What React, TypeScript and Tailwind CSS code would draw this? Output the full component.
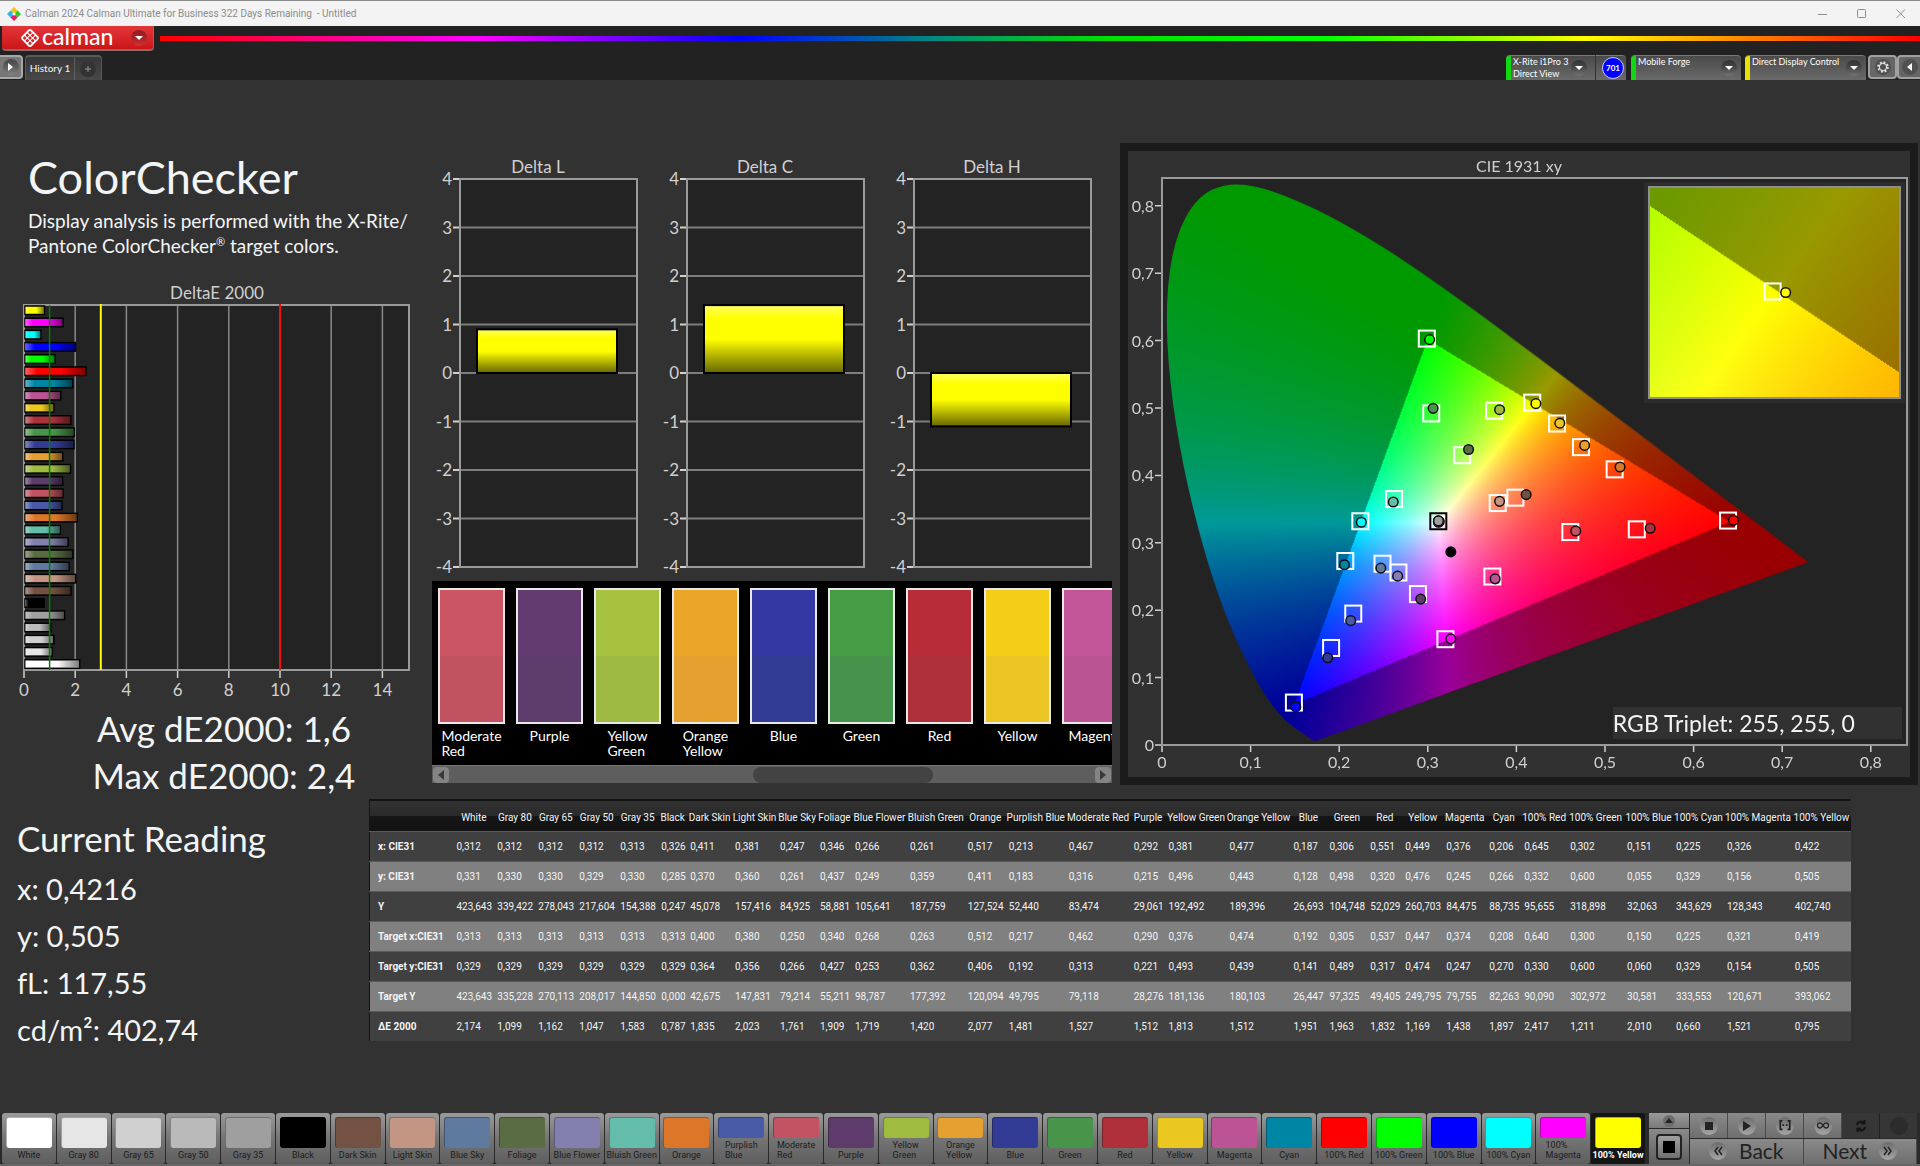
import React, { useEffect, useRef } from "react";

type Patch = {
  name: string;
  color: string;
  two?: boolean;
  col: number;
  x: string;
  y: string;
  Y: string;
  tx: string;
  ty: string;
  tY: string;
  dE: string;
};

const p = (name: string, color: string, col: number, row: string, two = false): Patch => {
  const [x, y, Y, tx, ty, tY, dE] = row.split(" ");
  return { name, color, col, two, x, y, Y, tx, ty, tY, dE };
};

const patches: Patch[] = [
  p("White", "#ffffff", 41, "0,312 0,331 423,643 0,313 0,329 423,643 2,174"),
  p("Gray 80", "#e6e6e6", 41, "0,312 0,330 339,422 0,313 0,329 335,228 1,099"),
  p("Gray 65", "#d0d0d0", 41, "0,312 0,330 278,043 0,313 0,329 270,113 1,162"),
  p("Gray 50", "#bababa", 41, "0,312 0,329 217,604 0,313 0,329 208,017 1,047"),
  p("Gray 35", "#9f9f9f", 41, "0,313 0,330 154,388 0,313 0,329 144,850 1,583"),
  p("Black", "#000000", 29, "0,326 0,285 0,247 0,313 0,329 0,000 0,787"),
  p("Dark Skin", "#735244", 45, "0,411 0,370 45,078 0,400 0,364 42,675 1,835"),
  p("Light Skin", "#c29682", 45, "0,381 0,360 157,416 0,380 0,356 147,831 2,023"),
  p("Blue Sky", "#5e7a9f", 40, "0,247 0,261 84,925 0,250 0,266 79,214 1,761"),
  p("Foliage", "#596c42", 35, "0,346 0,437 58,881 0,340 0,427 55,211 1,909"),
  p("Blue Flower", "#8380b0", 55, "0,266 0,249 105,641 0,268 0,253 98,787 1,719"),
  p("Bluish Green", "#64bdaa", 58, "0,261 0,359 187,759 0,263 0,362 177,392 1,420"),
  p("Orange", "#dc7729", 41, "0,517 0,411 127,524 0,512 0,406 120,094 2,077"),
  p("Purplish Blue", "#495ba6", 60, "0,213 0,183 52,440 0,217 0,192 49,795 1,481", true),
  p("Moderate Red", "#c35362", 65, "0,467 0,316 83,474 0,462 0,313 79,118 1,527", true),
  p("Purple", "#5d3c6c", 35, "0,292 0,215 29,061 0,290 0,221 28,276 1,512"),
  p("Yellow Green", "#9fbc41", 61, "0,381 0,496 192,492 0,376 0,493 181,136 1,813", true),
  p("Orange Yellow", "#e5a02f", 64, "0,477 0,443 189,396 0,474 0,439 180,103 1,512", true),
  p("Blue", "#323c95", 36, "0,187 0,128 26,693 0,192 0,141 26,447 1,951"),
  p("Green", "#47944a", 41, "0,306 0,498 104,748 0,305 0,489 97,325 1,963"),
  p("Red", "#af303b", 35, "0,551 0,320 52,029 0,537 0,317 49,405 1,832"),
  p("Yellow", "#ebc722", 41, "0,449 0,476 260,703 0,447 0,474 249,795 1,169"),
  p("Magenta", "#bb5395", 43, "0,376 0,245 84,475 0,374 0,247 79,755 1,438"),
  p("Cyan", "#0086a5", 35, "0,206 0,266 88,735 0,208 0,270 82,263 1,897"),
  p("100% Red", "#ff0000", 46, "0,645 0,332 95,655 0,640 0,330 90,090 2,417"),
  p("100% Green", "#00ff00", 57, "0,302 0,600 318,898 0,300 0,600 302,972 1,211"),
  p("100% Blue", "#0000ff", 49, "0,151 0,055 32,063 0,150 0,060 30,581 2,010"),
  p("100% Cyan", "#00ffff", 51, "0,225 0,329 343,629 0,225 0,329 333,553 0,660"),
  p("100% Magenta", "#ff00ff", 68, "0,326 0,156 128,343 0,321 0,154 120,671 1,521", true),
  p("100% Yellow", "#ffff00", 59, "0,422 0,505 402,740 0,419 0,505 393,062 0,795"),
];

const num = (s: string) => parseFloat(s.replace(",", "."));

/* ---------- chromaticity ---------- */

const locus: [number, number][] = [
  [0.1741, 0.005], [0.1726, 0.0048], [0.1714, 0.0051], [0.1689, 0.0069], [0.1644, 0.0109],
  [0.1566, 0.0177], [0.144, 0.0297], [0.1355, 0.0399], [0.1241, 0.0578], [0.1096, 0.0868],
  [0.0913, 0.1327], [0.0687, 0.2007], [0.0454, 0.295], [0.0235, 0.4127], [0.0082, 0.5384],
  [0.0039, 0.6548], [0.0139, 0.7502], [0.0389, 0.812], [0.0743, 0.8338], [0.1142, 0.8262],
  [0.1547, 0.8059], [0.1929, 0.7816], [0.2296, 0.7543], [0.2658, 0.7243], [0.3016, 0.6923],
  [0.3373, 0.6589], [0.3731, 0.6245], [0.4087, 0.5896], [0.4441, 0.5547], [0.4788, 0.5202],
  [0.5125, 0.4866], [0.5448, 0.4544], [0.5752, 0.4242], [0.6029, 0.3965], [0.627, 0.3725],
  [0.6482, 0.3514], [0.6658, 0.334], [0.6915, 0.3083], [0.7079, 0.292], [0.73, 0.27],
];

type View = { x0: number; x1: number; y0: number; y1: number };

function paint(canvas: HTMLCanvasElement, v: View, clip: boolean) {
  const ctx = canvas.getContext("2d");
  if (!ctx) return;
  const { width: w, height: h } = canvas;
  const layer = document.createElement("canvas");
  layer.width = w;
  layer.height = h;
  const lctx = layer.getContext("2d")!;
  const img = lctx.createImageData(w, h);
  for (let j = 0; j < h; j++) {
    for (let i = 0; i < w; i++) {
      const x = v.x0 + ((i + 0.5) / w) * (v.x1 - v.x0);
      const y = v.y1 - ((j + 0.5) / h) * (v.y1 - v.y0);
      const z = 1 - x - y;
      const rgb = [
        3.2406 * x - 1.5372 * y - 0.4986 * z,
        -0.9689 * x + 1.8758 * y + 0.0415 * z,
        0.0557 * x - 0.204 * y + 1.057 * z,
      ];
      const k = Math.min(...rgb) >= -0.001 ? 255 : 153;
      const m = Math.max(...rgb);
      const o = (j * w + i) * 4;
      for (let c = 0; c < 3; c++) img.data[o + c] = (k * Math.max(0, rgb[c])) / m;
      img.data[o + 3] = 255;
    }
  }
  lctx.putImageData(img, 0, 0);
  ctx.clearRect(0, 0, w, h);
  ctx.save();
  if (clip) {
    const P = locus.map(([x, y]) => [((x - v.x0) / (v.x1 - v.x0)) * w, ((v.y1 - y) / (v.y1 - v.y0)) * h]);
    ctx.beginPath();
    ctx.moveTo(P[0][0], P[0][1]);
    for (let i = 1; i < P.length - 1; i++) {
      ctx.quadraticCurveTo(P[i][0], P[i][1], (P[i][0] + P[i + 1][0]) / 2, (P[i][1] + P[i + 1][1]) / 2);
    }
    ctx.lineTo(P[P.length - 1][0], P[P.length - 1][1]);
    ctx.closePath();
    ctx.clip();
  }
  ctx.drawImage(layer, 0, 0);
  ctx.restore();
}

function Chroma({ view, w, h, clip, className }: { view: View; w: number; h: number; clip: boolean; className: string }) {
  const ref = useRef<HTMLCanvasElement>(null);
  useEffect(() => {
    if (ref.current) paint(ref.current, view, clip);
  }, [view, clip]);
  return <canvas ref={ref} width={w} height={h} className={className} />;
}

const mainView: View = { x0: 0, x1: 0.8415, y0: 0, y1: 0.8405 };
const insetView: View = { x0: 0.3944, x1: 0.4444, y0: 0.4802, y1: 0.5302 };

const CX = (x: number) => 34 + x * 886;
const CY = (y: number) => 594 - y * 674;

function CieChart() {
  const ticks = [0, 1, 2, 3, 4, 5, 6, 7, 8];
  const label = (t: number) => (t === 0 ? "0" : `0,${t}`);
  return (
    <section className="relative border-8 border-[#1b1b1b] bg-[#313131]">
      <div className="relative">
        <Chroma
          view={mainView}
          w={746}
          h={567}
          clip
          className="absolute top-[4.3%] left-[4.3%] h-[90.5%] w-[95.3%] bg-[#232323]"
        />
        <svg viewBox="0 0 782 626" className="relative block h-auto w-full font-[Lato]" role="img" aria-label="CIE 1931 xy">
          <text x="391" y="21" fontSize="16" fill="#d0d0d0" textAnchor="middle">CIE 1931 xy</text>
          <rect x="34" y="27" width="745" height="567" fill="none" stroke="#9a9a9a" strokeWidth="2" />
          {ticks.map((t) => (
            <g key={t} fill="#d0d0d0" fontSize="16">
              <path d={`M${CX(t / 10)} 595v6M33 ${CY(t / 10)}h-6`} stroke="#d0d0d0" strokeWidth="1.5" />
              <text x={CX(t / 10)} y="617" textAnchor="middle">{label(t)}</text>
              <text x="26" y={CY(t / 10) + 6} textAnchor="end">{label(t)}</text>
            </g>
          ))}
          {patches.slice(6).map((q) => (
            <rect key={q.name} x={CX(num(q.tx)) - 9} y={CY(num(q.ty)) - 10} width="16" height="16" fill="none" stroke="#fff" strokeWidth="2" />
          ))}
          <rect x={CX(0.313) - 9} y={CY(0.329) - 10} width="16" height="16" fill="none" stroke="#000" strokeWidth="2" />
          {patches.map((q) => (
            <circle key={q.name} cx={CX(num(q.x))} cy={CY(num(q.y)) - 1} r="4.8" fill={q.color} stroke="#111" strokeWidth="1.5" />
          ))}
          <circle cx={CX(0.312)} cy={CY(0.331) - 1} r="4.8" fill="#9f9f9f" stroke="#111" strokeWidth="1.5" />
        </svg>
        <div className="absolute top-[5%] right-[0.6%] w-[33.4%] border-4 border-[#2c2c2c]">
          <div className="relative border-2 border-[#8f8f8f]">
            <Chroma view={insetView} w={248} h={208} clip={false} className="block h-auto w-full" />
            <svg viewBox="0 0 248 208" className="absolute inset-0 size-full">
              <rect x="114" y="95" width="16" height="16" fill="none" stroke="#fff" strokeWidth="2" />
              <circle cx="135" cy="104" r="4.8" fill="#ff0" stroke="#111" strokeWidth="1.5" />
            </svg>
          </div>
        </div>
        <p className="absolute right-[1%] bottom-[6%] w-[37%] bg-[#313131] font-[Lato] text-[23px] leading-8 text-gray-100">
          RGB Triplet: 255, 255, 0
        </p>
      </div>
    </section>
  );
}

/* ---------- bar charts ---------- */

function DeltaChart({ title, value }: { title: string; value: number }) {
  const Y = (v: number) => 213 - v * 48.5;
  const top = value > 0 ? Y(value) : Y(0);
  const id = "shine" + title.slice(-1);
  return (
    <svg viewBox="0 0 227 421" className="block h-auto min-w-0 flex-1 font-[Lato]" role="img" aria-label={title}>
      <defs>
        <linearGradient id={id} x1="0" y1="0" x2="0" y2="1">
          <stop offset="0" stopColor="#ffff66" />
          <stop offset="0.2" stopColor="#ffff00" />
          <stop offset="0.5" stopColor="#ffff00" />
          <stop offset="1" stopColor="#666600" />
        </linearGradient>
      </defs>
      <rect x="27" y="19" width="177" height="388" fill="#232323" />
      <text x="105" y="13" fontSize="17" textAnchor="middle" fill="#d0d0d0">{title}</text>
      {[4, 3, 2, 1, 0, -1, -2, -3, -4].map((v) => (
        <g key={v}>
          <path d={`M27 ${Y(v)}h177`} stroke="#7d7d7d" strokeWidth="2" />
          <path d={`M20 ${Y(v)}h7`} stroke="#d0d0d0" strokeWidth="2" />
          <text x="19" y={Y(v) + 6} fontSize="17" textAnchor="end" fill="#d0d0d0">{v}</text>
        </g>
      ))}
      <rect x="27" y="19" width="177" height="388" fill="none" stroke="#9a9a9a" strokeWidth="2" />
      <rect x="44" y={top} width="140" height={Math.abs(value) * 48.5} fill={`url(#${id})`} stroke="#000" strokeWidth="2" />
    </svg>
  );
}

function DeltaEChart() {
  const X = (v: number) => 24 + v * 25.6;
  const rows = [...patches].reverse();
  return (
    <svg viewBox="0 0 432 425" className="block h-auto w-full font-[Lato]" role="img" aria-label="DeltaE 2000">
      <defs>
        <linearGradient id="barShade">
          <stop offset="0" stopColor="#fff" stopOpacity="0.4" />
          <stop offset="0.2" stopColor="#fff" stopOpacity="0" />
          <stop offset="0.6" stopColor="#000" stopOpacity="0" />
          <stop offset="1" stopColor="#000" stopOpacity="0.5" />
        </linearGradient>
      </defs>
      <text x="217" y="19" fontSize="17" textAnchor="middle" fill="#d0d0d0">DeltaE 2000</text>
      <rect x="24" y="25" width="385" height="365" fill="#232323" />
      {[0, 2, 4, 6, 8, 10, 12, 14].map((v) => (
        <g key={v}>
          <path d={`M${X(v)} 25v365`} stroke="#8a8a8a" strokeWidth="1.5" />
          <path d={`M${X(v)} 391v7`} stroke="#d0d0d0" strokeWidth="1.5" />
          <text x={X(v)} y="416" fontSize="17" textAnchor="middle" fill="#d0d0d0">{v}</text>
        </g>
      ))}
      <rect x="24" y="25" width="385" height="365" fill="none" stroke="#9a9a9a" strokeWidth="2" />
      {rows.map((q, i) => {
        const y = 26 + i * 12.2;
        const w = num(q.dE) * 25.6 - 1;
        return (
          <g key={q.name}>
            <rect x="25" y={y} width={w} height="8.5" fill={q.color} stroke="#000" strokeWidth="1.5" />
            <rect x="25" y={y + 0.75} width={w - 0.75} height="7" fill="url(#barShade)" />
          </g>
        );
      })}
      <path d={`M${X(1)} 25v365`} stroke="#008000" strokeWidth="1.5" />
      <path d={`M${X(3)} 24v366`} stroke="#ffff00" strokeWidth="2" />
      <path d={`M${X(10)} 24v366`} stroke="#f01010" strokeWidth="2" />
    </svg>
  );
}

/* ---------- header ---------- */

const Down = () => (
  <span className="flex size-4 shrink-0 items-center justify-center rounded-full bg-gradient-to-b from-black/35 to-white/10">
    <svg viewBox="0 0 8 4" className="w-2 fill-white"><path d="M0 0h8L4 4z" /></svg>
  </span>
);

function TitleBar() {
  return (
    <div className="flex h-[26px] items-center border-t border-[#8a8a8a] bg-[#f3f3f3] pr-3.5 pl-[7px] text-[#8c8c8c]">
      <svg viewBox="0 0 14 14" className="size-3.5">
        <path d="M7 0l3.500 3.500L7 7 3.500 3.500z" fill="#fdc10a" />
        <path d="M3.500 3.500L7 7l-3.500 3.500L0 7z" fill="#2bb5f0" />
        <path d="M10.500 3.500L14 7l-3.500 3.500L7 7z" fill="#25d025" />
        <path d="M7 7l3.500 3.500L7 14l-3.500-3.500z" fill="#ee1a6b" />
        <path d="M7 5.200L8.800 7 7 8.800 5.200 7z" fill="#fff" />
      </svg>
      <p className="ml-1 flex-1 font-[Roboto] text-[10px] whitespace-pre">
        Calman 2024 Calman Ultimate for Business 322 Days Remaining  - Untitled
      </p>
      <div className="flex items-center gap-[29px]">
        <button aria-label="Minimize"><svg viewBox="0 0 10 10" className="block size-2.5 stroke-current"><path d="M0 5.500h9" /></svg></button>
        <button aria-label="Maximize"><svg viewBox="0 0 10 10" className="block size-2.5 fill-none stroke-current"><rect x=".5" y=".5" width="8" height="8" rx="1" /></svg></button>
        <button aria-label="Close"><svg viewBox="0 0 10 10" className="block size-2.5 stroke-current"><path d="M.5.500l8.500 8.500M9 .5L.5 9" /></svg></button>
      </div>
    </div>
  );
}

function CalmanMark() {
  return (
    <svg viewBox="0 0 20 20" className="size-5">
      <g transform="rotate(45 10 10)" fill="#fff">
        <rect x="3" y="3" width="14" height="14" rx="2.500" />
        <g fill="#d92025">
          <rect x="4.800" y="4.800" width="2.800" height="2.800" rx=".8" />
          <rect x="8.600" y="4.800" width="2.800" height="2.800" rx=".8" />
          <rect x="12.400" y="4.800" width="2.800" height="2.800" rx=".8" />
          <rect x="4.800" y="8.600" width="2.800" height="2.800" rx=".8" />
          <rect x="8.600" y="8.600" width="2.800" height="2.800" rx=".8" />
          <rect x="12.400" y="8.600" width="2.800" height="2.800" rx=".8" />
          <rect x="4.800" y="12.400" width="2.800" height="2.800" rx=".8" />
          <rect x="8.600" y="12.400" width="2.800" height="2.800" rx=".8" />
          <rect x="12.400" y="12.400" width="2.800" height="2.800" rx=".8" />
        </g>
      </g>
    </svg>
  );
}

const deviceBtn =
  "flex h-[25px] justify-between overflow-hidden rounded-t-[4px] border-t border-[#7a7a7a] bg-gradient-to-b from-[#4a4a4a] to-[#6a6a6a] text-left font-[Lato] text-[9px] leading-3 text-white";

function Header() {
  return (
    <header className="bg-[#222222]">
      <div className="flex h-[25px] items-center pl-0.5">
        <button className="flex h-[25px] w-[152px] items-center rounded-b-[4px] border-r border-b-2 border-[#8f6a6a] bg-gradient-to-b from-[#e23539] to-[#cc1417] pr-1.5 pl-[18px]">
          <CalmanMark />
          <span className="ml-0.5 flex-1 pb-1 text-left font-[Lato] text-[23px] leading-5 font-medium text-white">calman</span>
          <Down />
        </button>
        <div className="ml-1.5 h-[5px] flex-1 bg-[linear-gradient(90deg,#ff0000_0%,#ff00ff_18%,#0000ff_33%,#008a80_44%,#00e000_54%,#00ff00_66%,#ffff00_81%,#ff0000_100%)]" />
      </div>
      <div className="mt-1 flex items-start justify-between">
        <div className="flex">
          <button aria-label="Expand" className="flex h-6 w-[23px] items-center justify-center rounded-r-[4px] border-2 border-l-0 border-[#a8a8a8] bg-[#777]">
            <span className="flex size-4 items-center justify-center rounded-full bg-gradient-to-b from-black/40 to-white/10">
              <svg viewBox="0 0 5 8" className="h-2 fill-white"><path d="M0 0l5 4-5 4z" /></svg>
            </span>
          </button>
          <div className="ml-0.5 flex h-[25px] rounded-t-[4px] border-x border-t-2 border-[#5a5a5a] bg-gradient-to-b from-[#383838] to-[#484848]">
            <button className="w-[49px] border-r border-[#5f5f5f] font-[Lato] text-[10px] text-gray-100">History 1</button>
            <button aria-label="Add tab" className="flex w-[26px] items-center justify-center">
              <span className="flex size-4 items-center justify-center rounded-full bg-[#333]">
                <svg viewBox="0 0 6 6" className="size-1.5 stroke-[#999]"><path d="M3 0v6M0 3h6" /></svg>
              </span>
            </button>
          </div>
        </div>
        <div className="flex items-start">
          <button className={deviceBtn + " w-[90px] rounded-tr-none border-r border-r-[#333]"}>
            <span className="h-full w-[5px] shrink-0 bg-[#12d812]" />
            <span className="ml-0.5 flex-1 whitespace-nowrap">X-Rite i1Pro 3<br />Direct View</span>
            <span className="mt-1 mr-2"><Down /></span>
          </button>
          <button className={deviceBtn + " w-[30px] rounded-tl-none pl-1"}>
            <span className="m-auto flex size-[22px] items-center justify-center rounded-full border border-[#c8c8ff] bg-[#0000ff] text-[8px] font-bold">701</span>
          </button>
          <button className={deviceBtn + " ml-[5px] w-[110px]"}>
            <span className="h-full w-[5px] shrink-0 bg-[#12d812]" />
            <span className="ml-0.5 flex-1">Mobile Forge</span>
            <span className="mt-1 mr-1"><Down /></span>
          </button>
          <button className={deviceBtn + " ml-1 w-[121px]"}>
            <span className="h-full w-[5px] shrink-0 bg-[#e8e000]" />
            <span className="ml-0.5 flex-1 whitespace-nowrap">Direct Display Control</span>
            <span className="mt-1 mr-1"><Down /></span>
          </button>
          <button aria-label="Settings" className="ml-0.5 flex h-6 w-[29px] items-center justify-center rounded-[4px] border-2 border-[#a0a0a0] bg-[#666]">
            <svg viewBox="0 0 16 16" className="size-4">
              <circle cx="8" cy="8" r="8" fill="#505050" />
              <circle cx="8" cy="8" r="4.800" fill="none" stroke="#ddd" strokeWidth="2" strokeDasharray="1.900 1.870" />
              <circle cx="8" cy="8" r="3.600" fill="#505050" stroke="#ddd" strokeWidth="1.200" />
            </svg>
          </button>
          <button aria-label="Collapse" className="flex h-6 w-[23px] items-center justify-center rounded-l-[4px] border-2 border-r-0 border-[#a0a0a0] bg-[#666]">
            <span className="flex size-4 items-center justify-center rounded-full bg-[#505050]">
              <svg viewBox="0 0 5 8" className="h-2 fill-white"><path d="M5 0L0 4l5 4z" /></svg>
            </span>
          </button>
        </div>
      </div>
    </header>
  );
}

/* ---------- swatch strip ---------- */

const strip: [string, string, string, string][] = [
  ["Moderate", "Red", "#c95662", "#c15361"],
  ["Purple", "", "#633b70", "#5c3d6b"],
  ["Yellow", "Green", "#a7c23f", "#9fba42"],
  ["Orange", "Yellow", "#eba529", "#e5a030"],
  ["Blue", "", "#3438a2", "#323c95"],
  ["Green", "", "#459c45", "#47924a"],
  ["Red", "", "#b72c36", "#ad303b"],
  ["Yellow", "", "#f4cd17", "#ebc524"],
  ["Magenta", "", "#c15597", "#ba5493"],
];

function SwatchStrip() {
  return (
    <section className="mr-0.5 overflow-hidden bg-black">
      <div className="flex h-[184px] gap-[11px] overflow-hidden pt-[7px] pl-1.5">
        {strip.map(([a, b, top, bottom], i) => (
          <div key={i} className="flex w-[67px] shrink-0 flex-col items-center">
            <div className="flex h-[136px] w-full flex-col border-2 border-[#e8e8e8]">
              <div className="flex-1" style={{ background: top }} />
              <div className="flex-1" style={{ background: bottom }} />
            </div>
            <p className="mt-1 font-[Lato] text-[14px] leading-[15px] text-white">
              {a}
              {b && <><br />{b}</>}
            </p>
          </div>
        ))}
      </div>
      <div className="flex h-[18px] items-center border-t border-[#777] bg-[#5e5e5e] px-px">
        <button aria-label="Scroll left" className="flex h-4 w-4 items-center justify-center rounded bg-[#858585]">
          <svg viewBox="0 0 6 10" className="h-2.5 fill-[#3a3a3a]"><path d="M6 0L0 5l6 5z" /></svg>
        </button>
        <div className="flex-1">
          <div className="ml-[47%] h-4 w-[28%] rounded-lg bg-[#434343]" />
        </div>
        <button aria-label="Scroll right" className="flex h-4 w-4 items-center justify-center rounded bg-[#858585]">
          <svg viewBox="0 0 6 10" className="h-2.5 fill-[#3a3a3a]"><path d="M0 0l6 5-6 5z" /></svg>
        </button>
      </div>
    </section>
  );
}

/* ---------- table ---------- */

const rowDefs: [string, keyof Patch][] = [
  ["x: CIE31", "x"],
  ["y: CIE31", "y"],
  ["Y", "Y"],
  ["Target x:CIE31", "tx"],
  ["Target y:CIE31", "ty"],
  ["Target Y", "tY"],
  ["ΔE 2000", "dE"],
];

function ReadingsTable() {
  const total = 84 + patches.reduce((s, q) => s + q.col, 0);
  return (
    <table className="w-full table-fixed border-t-2 border-l border-[#141414] font-[Roboto] text-[10px] whitespace-nowrap text-gray-100">
      <colgroup>
        <col style={{ width: `${(84 / total) * 100}%` }} />
        {patches.map((q) => (
          <col key={q.name} style={{ width: `${(q.col / total) * 100}%` }} />
        ))}
      </colgroup>
      <thead>
        <tr className="h-[31px] bg-[linear-gradient(#333333_0%,#2a2a2a_50%,#161616_52%,#121212_100%)]">
          <td />
          {patches.map((q) => (
            <th key={q.name} scope="col" className="p-0 pt-1 text-center font-normal">{q.name}</th>
          ))}
        </tr>
      </thead>
      <tbody>
        {rowDefs.map(([label, key]) => (
          <tr key={label} className="h-[30px] border-t border-[#5a5a5a] bg-[#404040] even:bg-[#808080]">
            <th scope="row" className="p-0 pl-2 text-left font-bold">{label}</th>
            {patches.map((q) => (
              <td key={q.name} className="p-0 pl-[3px]">{q[key]}</td>
            ))}
          </tr>
        ))}
      </tbody>
    </table>
  );
}

/* ---------- footer ---------- */

const toolBtn = "flex flex-1 items-center justify-center border-r border-[#4a4a4a] bg-gradient-to-b from-[#8a8a8a] to-[#6e6e6e]";
const disc = "flex size-[18px] items-center justify-center rounded-full bg-gradient-to-b from-[#6c6c6c] to-[#a6a6a6]";

function Footer() {
  return (
    <footer className="flex h-[53px] border-b-2 border-[#666] bg-[#2a2a2a] pl-0.5">
      <div className="flex flex-1 gap-px">
        {patches.map((q, i) => {
          const on = i === patches.length - 1;
          return (
            <button
              key={q.name}
              className={
                "flex min-w-0 flex-1 flex-col items-center overflow-hidden rounded-[3px] pt-1 font-[Roboto] text-[9px] " +
                (on ? "bg-[#151515] font-bold text-white" : "bg-gradient-to-b from-[#9a9a9a] via-[#757575] to-[#5e5e5e] text-[#1c1c1c]")
              }
            >
              <span
                className={"w-[46px] shrink-0 rounded-[3px] border-t border-l border-black/30 " + (q.two ? "h-[21px]" : "h-[31px]")}
                style={{ background: q.color }}
              />
              {q.two ? (
                <span className="mt-0.5 text-left leading-[10px]">{q.name.split(" ")[0]}<br />{q.name.split(" ")[1]}</span>
              ) : (
                <span className="mt-0.5 leading-[10px] whitespace-nowrap">{q.name}</span>
              )}
            </button>
          );
        })}
      </div>
      <div className="ml-1 flex w-[40px] flex-col">
        <button aria-label="Show list" className="flex h-[15px] items-center justify-center bg-gradient-to-b from-[#9a9a9a] to-[#7a7a7a]">
          <span className="flex size-3 items-center justify-center rounded-full bg-[#6c6c6c]">
            <svg viewBox="0 0 8 5" className="w-2 fill-[#222]"><path d="M0 5h8L4 0z" /></svg>
          </span>
        </button>
        <button aria-label="Pattern window" className="mt-px flex flex-1 items-center justify-center bg-gradient-to-b from-[#8a8a8a] to-[#606060]">
          <span className="flex size-[26px] items-center justify-center rounded-[4px] border-2 border-[#222] bg-gradient-to-b from-[#a0a0a0] to-[#707070]">
            <span className="size-3 bg-black" />
          </span>
        </button>
      </div>
      <div className="mr-[3px] ml-px flex w-[227px] flex-col gap-px">
        <div className="flex h-[25px]">
          <button aria-label="Stop" className={toolBtn}><span className={disc}><svg viewBox="0 0 8 8" className="size-2"><path d="M0 0h8v8H0z" fill="#222" /></svg></span></button>
          <button aria-label="Play" className={toolBtn}><span className={disc}><svg viewBox="0 0 8 10" className="h-2.5"><path d="M0 0l8 5-8 5z" fill="#222" /></svg></span></button>
          <button aria-label="Read series" className={toolBtn}><span className={disc}><svg viewBox="0 0 14 12" className="w-3 fill-none stroke-[#222] stroke-2"><path d="M4 1H1.500v10H4M10 1h2.500v10H10M4 6h2M8 6h2" /></svg></span></button>
          <button aria-label="Read continuously" className={toolBtn}><span className={disc}><svg viewBox="0 0 14 8" className="w-3 fill-none stroke-[#222] stroke-[1.500]"><path d="M7 4C5.500 1.500 4.500 1 3.500 1a3 3 0 000 6C4.500 7 5.500 6.500 7 4s2.500-3 3.500-3a3 3 0 010 6C9.500 7 8.500 6.500 7 4z" /></svg></span></button>
          <button aria-label="Refresh" className="flex flex-1 items-center justify-center border-r border-[#222] bg-[#363636]"><svg viewBox="0 0 12 12" className="size-3 fill-none stroke-[#151515] stroke-2"><path d="M2 5a4 4 0 017-2M10 7a4 4 0 01-7 2M9.500 0v3.500H6M2.500 12V8.500H6" /></svg></button>
          <button aria-label="Disabled" className="flex flex-1 items-center justify-center bg-[#363636]"><span className="size-[18px] rounded-full bg-[#2c2c2c]" /></button>
        </div>
        <div className="flex h-[25px] font-[Lato] text-[21px] leading-5 text-[#222]">
          <button className={toolBtn + " gap-3 pb-0.5"}><span className={disc}><svg viewBox="0 0 10 10" className="size-2.5 fill-none stroke-[#222] stroke-[1.500]"><path d="M5 1L2 5l3 4M9 1L6 5l3 4" /></svg></span>Back</button>
          <button className={toolBtn + " gap-3 pb-0.5"}>Next<span className={disc}><svg viewBox="0 0 10 10" className="size-2.5 fill-none stroke-[#222] stroke-[1.500]"><path d="M1 1l3 4-3 4M5 1l3 4-3 4" /></svg></span></button>
        </div>
      </div>
    </footer>
  );
}

export default function App() {
  return (
    <div className="flex min-h-screen flex-col bg-[#323232] font-[Lato] text-gray-100">
      <TitleBar />
      <Header />
      <main className="flex-1">
        <div className="flex items-start pt-[63px]">
          <section className="w-[432px] shrink-0">
            <h1 className="pt-1 pl-7 text-[45px] leading-[60px]">ColorChecker</h1>
            <p className="pt-px pl-7 text-[19px] leading-[25px] whitespace-nowrap">
              Display analysis is performed with the X-Rite/
              <br />
              Pantone ColorChecker<sup className="top-0 align-super text-[11px] leading-none">®</sup> target colors.
            </p>
            <div className="mt-[22px]"><DeltaEChart /></div>
            <div className="pr-[-16px] pl-4 text-center text-[35px] leading-[47px]">
              <p>Avg dE2000: 1,6</p>
              <p>Max dE2000: 2,4</p>
            </div>
          </section>
          <section className="w-[682px] shrink-0 pt-[17px]">
            <div className="flex pl-px">
              <DeltaChart title="Delta L" value={0.9} />
              <DeltaChart title="Delta C" value={1.4} />
              <DeltaChart title="Delta H" value={-1.1} />
            </div>
            <SwatchStrip />
          </section>
          <div className="min-w-0 flex-1 pr-0.5 pl-1.5"><CieChart /></div>
        </div>
        <div className="flex items-start pr-[69px]">
          <section className="w-[369px] shrink-0 pt-4 pl-[17px]">
            <h2 className="text-[35px] leading-[46px]">Current Reading</h2>
            <div className="pt-1 text-[29px] leading-[47px]">
              <p>x: 0,4216</p>
              <p>y: 0,505</p>
              <p>fL: 117,55</p>
              <p>cd/m²: 402,74</p>
            </div>
          </section>
          <div className="min-w-0 flex-1"><ReadingsTable /></div>
        </div>
      </main>
      <Footer />
    </div>
  );
}
